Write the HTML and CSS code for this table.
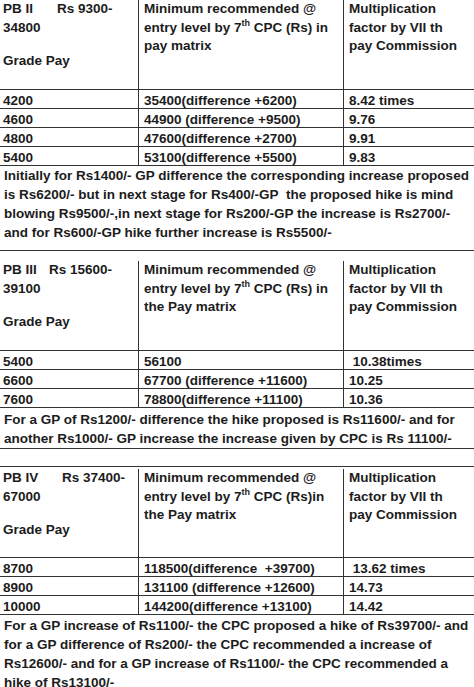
FILE: index.html
```html
<!DOCTYPE html>
<html lang="en">
<head>
<meta charset="utf-8">
<title>7th CPC pay comparison</title>
<link rel="stylesheet" href="styles.css">
</head>
<body>
<div class="page">

  <section class="block b1">
    <div class="row head">
      <div class="cell c1">
        <div><span class="tab t1">PB II</span>Rs 9300-</div>
        <div>34800</div>
        <div class="gp">Grade Pay</div>
      </div>
      <div class="cell c2">Minimum recommended @<br>entry level by 7<sup class="sup">th</sup> CPC (Rs) in<br>pay matrix</div>
      <div class="cell c3">Multiplication<br>factor by VII th<br>pay Commission</div>
    </div>
    <div class="row data"><div class="cell c1">4200</div><div class="cell c2">35400(difference +6200)</div><div class="cell c3">8.42 times</div></div>
    <div class="row data"><div class="cell c1">4600</div><div class="cell c2">44900 (difference +9500)</div><div class="cell c3">9.76</div></div>
    <div class="row data"><div class="cell c1">4800</div><div class="cell c2">47600(difference +2700)</div><div class="cell c3">9.91</div></div>
    <div class="row data"><div class="cell c1">5400</div><div class="cell c2">53100(difference +5500)</div><div class="cell c3">9.83</div></div>
    <p class="note n1">Initially for Rs1400/- GP difference the corresponding increase proposed<br>is Rs6200/- but in next stage for Rs400/-GP&nbsp; the proposed hike is mind<br>blowing Rs9500/-,in next stage for Rs200/-GP the increase is Rs2700/-<br>and for Rs600/-GP hike further increase is Rs5500/-</p>
  </section>

  <section class="block b2">
    <div class="row head">
      <div class="cell c1">
        <div><span class="tab t2">PB III</span>Rs 15600-</div>
        <div>39100</div>
        <div class="gp">Grade Pay</div>
      </div>
      <div class="cell c2">Minimum recommended @<br>entry level by 7<sup class="sup">th</sup> CPC (Rs) in<br>the Pay matrix</div>
      <div class="cell c3">Multiplication<br>factor by VII th<br>pay Commission</div>
    </div>
    <div class="row data"><div class="cell c1">5400</div><div class="cell c2">56100</div><div class="cell c3">&nbsp;10.38times</div></div>
    <div class="row data"><div class="cell c1">6600</div><div class="cell c2">67700 (difference +11600)</div><div class="cell c3">10.25</div></div>
    <div class="row data"><div class="cell c1">7600</div><div class="cell c2">78800(difference +11100)</div><div class="cell c3">10.36</div></div>
    <p class="note n2">For a GP of Rs1200/- difference the hike proposed is Rs11600/- and for<br>another Rs1000/- GP increase the increase given by CPC is Rs 11100/-</p>
  </section>

  <section class="block b3">
    <div class="row head">
      <div class="cell c1">
        <div><span class="tab t3">PB IV</span>Rs 37400-</div>
        <div>67000</div>
        <div class="gp">Grade Pay</div>
      </div>
      <div class="cell c2">Minimum recommended @<br>entry level by 7<sup class="sup">th</sup> CPC (Rs)in<br>the Pay matrix</div>
      <div class="cell c3">Multiplication<br>factor by VII th<br>pay Commission</div>
    </div>
    <div class="row data"><div class="cell c1">8700</div><div class="cell c2">118500(difference&nbsp; +39700)</div><div class="cell c3">&nbsp;13.62 times</div></div>
    <div class="row data"><div class="cell c1">8900</div><div class="cell c2">131100 (difference +12600)</div><div class="cell c3">14.73</div></div>
    <div class="row data"><div class="cell c1">10000</div><div class="cell c2">144200(difference +13100)</div><div class="cell c3">14.42</div></div>
    <p class="note n3">For a GP increase of Rs1100/- the CPC proposed a hike of Rs39700/- and<br>for a GP difference of Rs200/- the CPC recommended a increase of<br>Rs12600/- and for a GP increase of Rs1100/- the CPC recommended a<br>hike of Rs13100/-</p>
  </section>

</div>
</body>
</html>
```

FILE: styles.css
```css
html, body {
  margin: 0;
  padding: 0;
  background: #ffffff;
}

body {
  width: 474px;
  height: 687px;
  overflow: hidden;
  font-family: "Liberation Sans", Arial, sans-serif;
  font-size: 13.5px;
  font-weight: bold;
  color: #1c1c1c;
}

.page {
  display: flex;
  flex-direction: column;
}

.row {
  display: grid;
  grid-template-columns: 139px 205px 1fr;
  border-bottom: 1px solid #333333;
}

.cell {
  white-space: nowrap;
}

.c1,
.c2 {
  border-right: 1px solid #333333;
}

.c1 {
  padding-left: 3px;
}

.c2,
.c3 {
  padding-left: 5px;
}

.head {
  height: 89px;
  line-height: 18.5px;
}

.data {
  line-height: 15px;
}

.data .cell {
  padding-top: 3px;
}

.tab {
  display: inline-block;
}

.t1 { width: 54px; }
.t2 { width: 46px; }
.t3 { width: 59px; }

.gp {
  margin-top: 15px;
}

.sup {
  font-size: 9px;
  line-height: 0;
  vertical-align: baseline;
  position: relative;
  top: -6px;
}

.note {
  margin: 0;
  padding-left: 4px;
  line-height: 19px;
  white-space: nowrap;
  border-bottom: 1px solid #333333;
}

.n1 {
  padding-bottom: 8px;
}

.b2 {
  margin-top: 10px;
}

.n2 {
  padding-top: 2px;
}

.b3 {
  margin-top: 17px;
}

.b3 .head {
  border-top: 1px solid #333333;
  height: 88px;
  padding-top: 2px;
}

.n3 {
  padding-top: 1px;
}
```
